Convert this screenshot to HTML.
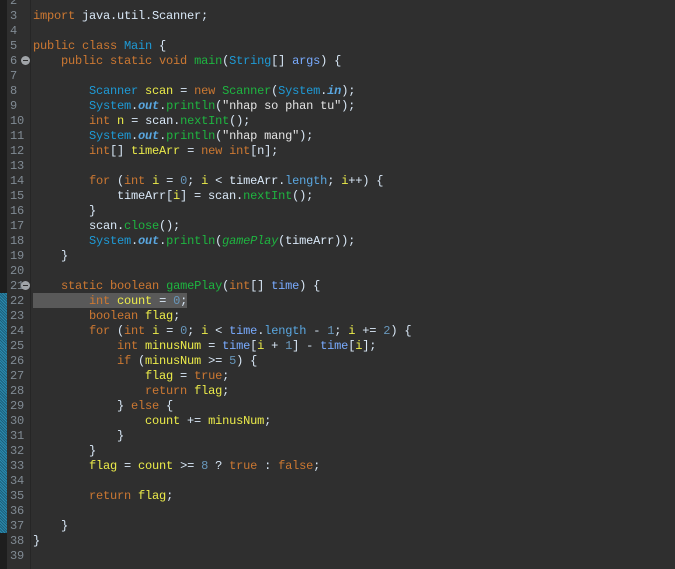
<!DOCTYPE html>
<html><head><style>
body{margin:0;width:675px;height:569px;overflow:hidden;background:#2f2f2f;position:relative;font-family:"Liberation Mono",monospace;font-size:12px;letter-spacing:-0.2px}
#gut{position:absolute;left:0;top:0;width:30px;height:569px;background:#2f2f2f;border-right:1px solid #262626}
#strip{position:absolute;left:0;top:0;width:7px;height:569px;background:#1e1e1e}
#strip2{position:absolute;left:0;top:293px;width:7px;height:240px;background:repeating-linear-gradient(45deg,#1d5f7a 0 1px,#2a8bb0 1px 2px)}
.ln{position:absolute;left:10px;width:20px;text-align:left;color:#818b94;height:15px;line-height:15px}
.cl{position:absolute;left:33px;white-space:pre;color:#d9e8f7;height:15px;line-height:15px}
.k{color:#cc7832}.c{color:#1e9ad6}.m{color:#1eb540}.v{color:#ecec4a}.p{color:#79abff}.n{color:#6897bb}.s{color:#e3e3e3}.f{color:#5aa7e0;font-style:italic;font-weight:bold}.fl{color:#5aa7e0}
.sel{position:absolute;left:33px;top:293px;width:154px;height:15px;background:#595959}
.fold{position:absolute;left:21px;width:9px;height:9px;border-radius:50%;background:#a0a4a8}
.fold:after{content:"";position:absolute;left:2px;top:4px;width:5px;height:1px;background:#2f2f2f}
</style></head><body>
<div id="gut"></div><div id="strip"></div><div id="strip2"></div>
<div class="sel"></div>
<div id="c"></div>
<div class="fold" style="top:56px"></div>
<div class="fold" style="top:281px"></div>
<script>
var L={2:'',3:'<span class="k">import</span> java.util.Scanner;',4:'',5:'<span class="k">public class</span> <span class="c">Main</span> {',
6:'    <span class="k">public static void</span> <span class="m">main</span>(<span class="c">String</span>[] <span class="p">args</span>) {',7:'',
8:'        <span class="c">Scanner</span> <span class="v">scan</span> = <span class="k">new</span> <span class="m">Scanner</span>(<span class="c">System</span>.<span class="f">in</span>);',
9:'        <span class="c">System</span>.<span class="f">out</span>.<span class="m">println</span>(<span class="s">"nhap so phan tu"</span>);',
10:'        <span class="k">int</span> <span class="v">n</span> = scan.<span class="m">nextInt</span>();',
11:'        <span class="c">System</span>.<span class="f">out</span>.<span class="m">println</span>(<span class="s">"nhap mang"</span>);',
12:'        <span class="k">int</span>[] <span class="v">timeArr</span> = <span class="k">new int</span>[n];',13:'',
14:'        <span class="k">for</span> (<span class="k">int</span> <span class="v">i</span> = <span class="n">0</span>; <span class="v">i</span> &lt; timeArr.<span class="fl">length</span>; <span class="v">i</span>++) {',
15:'            timeArr[<span class="v">i</span>] = scan.<span class="m">nextInt</span>();',16:'        }',
17:'        scan.<span class="m">close</span>();',
18:'        <span class="c">System</span>.<span class="f">out</span>.<span class="m">println</span>(<span class="m"><i>gamePlay</i></span>(timeArr));',
19:'    }',20:'',
21:'    <span class="k">static boolean</span> <span class="m">gamePlay</span>(<span class="k">int</span>[] <span class="p">time</span>) {',
22:'        <span class="k">int</span> <span class="v">count</span> = <span class="n">0</span>;',
23:'        <span class="k">boolean</span> <span class="v">flag</span>;',
24:'        <span class="k">for</span> (<span class="k">int</span> <span class="v">i</span> = <span class="n">0</span>; <span class="v">i</span> &lt; <span class="p">time</span>.<span class="fl">length</span> - <span class="n">1</span>; <span class="v">i</span> += <span class="n">2</span>) {',
25:'            <span class="k">int</span> <span class="v">minusNum</span> = <span class="p">time</span>[<span class="v">i</span> + <span class="n">1</span>] - <span class="p">time</span>[<span class="v">i</span>];',
26:'            <span class="k">if</span> (<span class="v">minusNum</span> &gt;= <span class="n">5</span>) {',
27:'                <span class="v">flag</span> = <span class="k">true</span>;',
28:'                <span class="k">return</span> <span class="v">flag</span>;',
29:'            } <span class="k">else</span> {',
30:'                <span class="v">count</span> += <span class="v">minusNum</span>;',
31:'            }',32:'        }',
33:'        <span class="v">flag</span> = <span class="v">count</span> &gt;= <span class="n">8</span> ? <span class="k">true</span> : <span class="k">false</span>;',34:'',
35:'        <span class="k">return</span> <span class="v">flag</span>;',36:'',37:'    }',38:'}',39:''};
var h='';for(var i=2;i<=39;i++){var t=-6.5+(i-2)*15;h+='<div class="ln" style="top:'+t+'px">'+i+'</div><div class="cl" style="top:'+t+'px">'+L[i]+'</div>';}
document.getElementById('c').innerHTML=h;
</script>
</body></html>
